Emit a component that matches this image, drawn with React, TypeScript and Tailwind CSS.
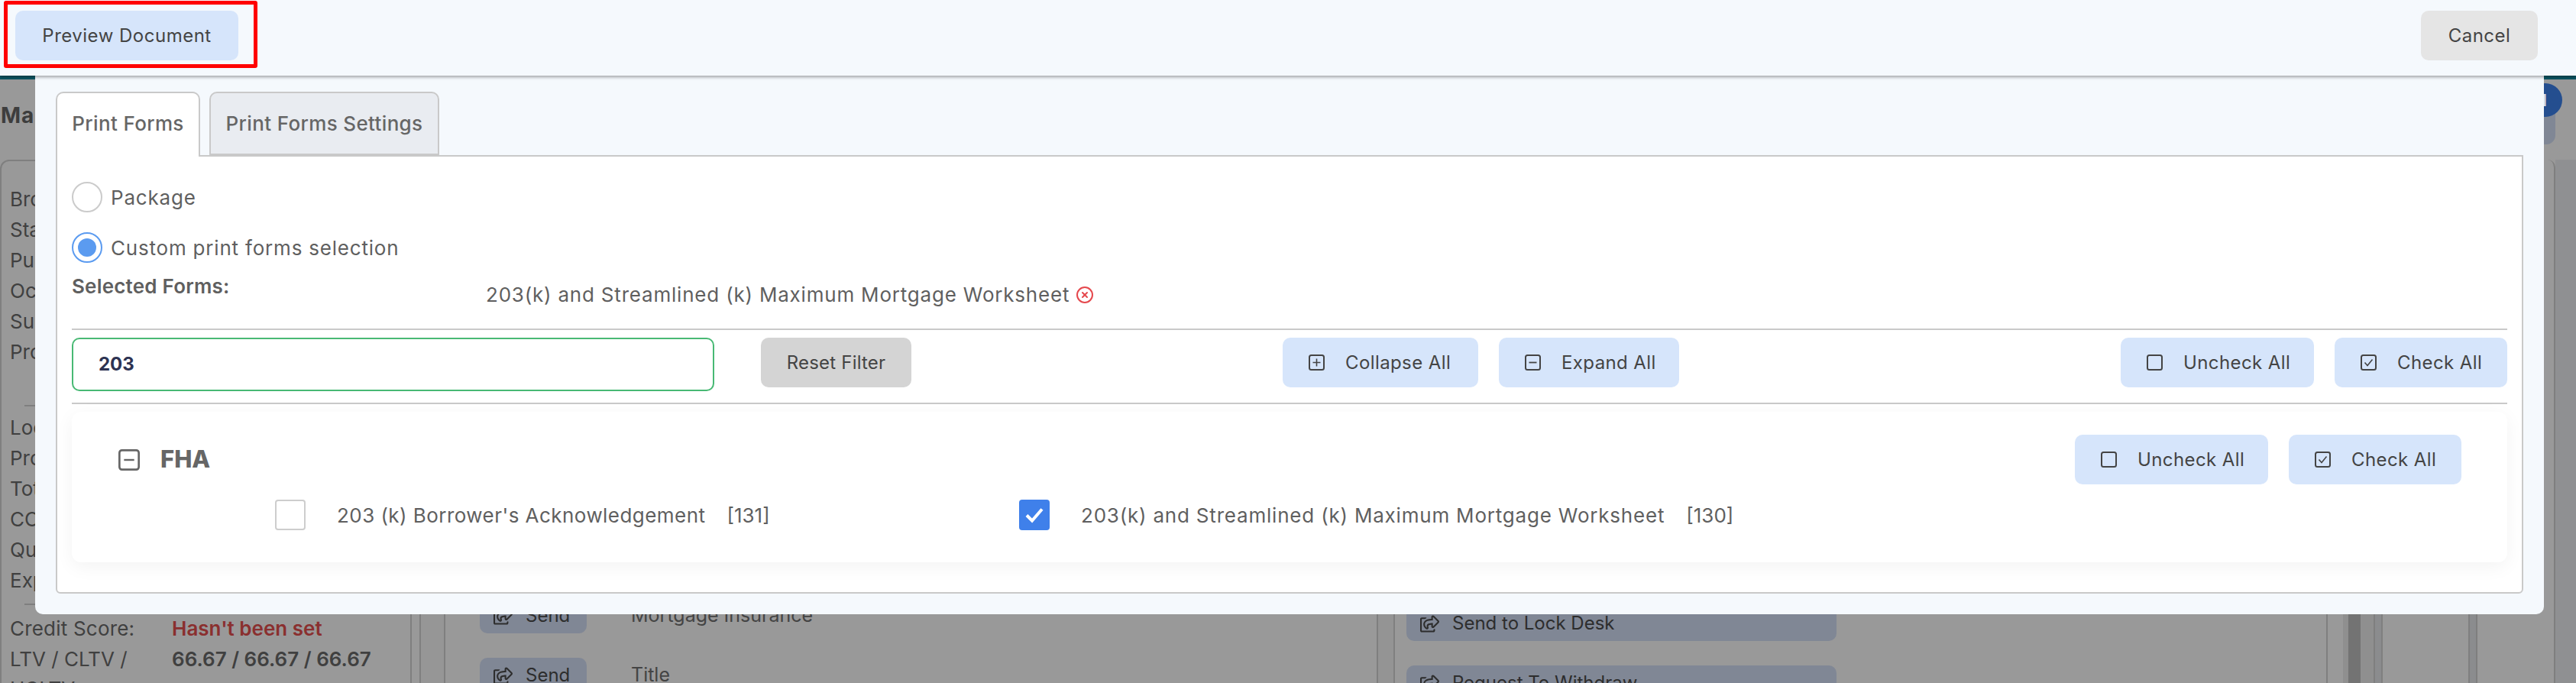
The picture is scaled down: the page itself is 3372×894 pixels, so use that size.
import React from "react";
import { CircleX } from "lucide-react";
import { FaRegShareSquare } from "react-icons/fa";

function BoxIcon({ kind, size = 21 }: { kind: "plus" | "minus" | "check" | "empty"; size?: number }) {
  return (
    <svg width={size} height={size} viewBox="0 0 21 21" fill="none" stroke="currentColor" className="shrink-0">
      <rect x="1" y="1" width="19" height="19" rx="2.5" strokeWidth="2" />
      {kind === "plus" && <path d="M10.5 5.5v10M5.5 10.5h10" strokeWidth="1.6" />}
      {kind === "minus" && <path d="M5.5 10.5h10" strokeWidth="1.8" />}
      {kind === "check" && <path d="M5.5 10.5l3.5 4 6.5-8" strokeWidth="1.6" />}
    </svg>
  );
}

function IconButton({ kind, label, width }: { kind: "plus" | "minus" | "check" | "empty"; label: string; width: string }) {
  return (
    <button className={`flex h-[65px] items-center gap-[27px] rounded-[10px] bg-[#d6e5fb] pl-[34px] text-[24px] tracking-[0.4px] text-[#444] ${width}`}>
      <BoxIcon kind={kind} />
      <span className="whitespace-nowrap">{label}</span>
    </button>
  );
}

function Radio({ checked, label }: { checked?: boolean; label: string }) {
  return (
    <label className="flex items-center gap-[11px] text-[26px] tracking-[0.8px] text-[#5f5f5f]">
      <span
        className={`flex size-[40px] items-center justify-center rounded-full border-2 bg-white ${
          checked ? "border-[#5b9bf0]" : "border-[#cbcbcb]"
        }`}
      >
        {checked && <span className="size-[24px] rounded-full bg-[#5b9bf0]" />}
      </span>
      {label}
    </label>
  );
}

function SendRow({ label }: { label: string }) {
  return (
    <div className="mb-[32px] flex items-center">
      <div className="flex h-[46px] w-[140px] items-center gap-[17px] rounded-[10px] bg-[#808795] pl-[18px] text-[24px] text-[#2d2d2d]">
        <FaRegShareSquare className="text-[25px]" />
        Send
      </div>
      <span className="ml-[58px] text-[25px] text-[#444]">{label}</span>
    </div>
  );
}

function WideSend({ label }: { label: string }) {
  return (
    <div className="mb-[32px] flex h-[46px] w-[563px] items-center gap-[17px] rounded-[10px] bg-[#808795] pl-[18px] text-[24px] text-[#2d2d2d]">
      <FaRegShareSquare className="text-[25px]" />
      {label}
    </div>
  );
}

const sideRows = ["Broker", "Status", "Purpose", "Occupancy", "Subject", "Program"];
const sideRows2 = ["Lock", "Product", "Total", "COE", "Quote", "Expiration"];

function Backdrop() {
  return (
    <div className="flex h-[894px] flex-col bg-[#999] text-[#404040]">
      <div className="h-[104px] bg-[#0b5563]" />
      <div className="relative flex h-[105px] justify-between">
        <h1 className="pl-px pt-[26px] text-[28px] font-bold tracking-[1px] text-[#3d3d3d]">Manage Loan</h1>
        <div className="mr-[27px] mt-[16px] h-[69px] w-[200px] rounded-[12px] bg-[#808795]" />
        <span className="absolute right-[18px] top-[5px] flex h-[44px] w-[80px] items-center justify-end rounded-full bg-[#244e8f] pr-[20px] text-[22px] font-semibold text-[#d5dbe5]">
          1
        </span>
      </div>
      <div className="flex flex-1 overflow-hidden">
        {/* sidebar */}
        <aside className="w-[539px] shrink-0 rounded-tl-[12px] border-x-2 border-t-2 border-[#7f7f7f] pl-[11px] pt-[30px] text-[26px]">
          {sideRows.map((row) => (
            <div key={row} className="h-[40px] leading-[40px]">{row}</div>
          ))}
          <div className="mb-[8px] ml-[19px] mt-[49px] h-[2px] w-[200px] bg-[#7f7f7f]" />
          {sideRows2.map((row) => (
            <div key={row} className="h-[40px] leading-[40px]">{row}</div>
          ))}
          <div className="my-[10px] ml-[19px] h-[2px] w-[200px] bg-[#7f7f7f]" />
          <div className="flex h-[40px] items-center">
            <span className="w-[212px] tracking-[0.2px]">Credit Score:</span>
            <span className="font-semibold text-[#8a2f2f]">Hasn't been set</span>
          </div>
          <div className="flex h-[40px] items-center">
            <span className="w-[212px]">LTV / CLTV /</span>
            <span className="font-semibold">66.67 / 66.67 / 66.67</span>
          </div>
          <div className="h-[40px] leading-[40px]">HCLTV</div>
        </aside>
        <div className="w-[10px] shrink-0" />
        <div className="w-[32px] shrink-0 border-l-2 border-[#7f7f7f] bg-[#969696]" />
        {/* send list */}
        <main className="w-[1223px] shrink-0 border-x-2 border-[#7f7f7f] pl-[45px] pt-[574px]">
          <SendRow label="Mortgage Insurance" />
          <SendRow label="Title" />
        </main>
        <div className="w-[20px] shrink-0 bg-[#949494]" />
        <section className="w-[1221px] shrink-0 border-l-2 border-[#7f7f7f] pl-[15px] pt-[584px]">
          <WideSend label="Send to Lock Desk" />
          <WideSend label="Request To Withdraw" />
        </section>
        {/* right side rails */}
        <div className="w-[22px] shrink-0 border-l-2 border-[#7f7f7f]" />
        <div className="w-[7px] shrink-0 bg-[#8f8f8f]" />
        <div className="w-[16px] shrink-0 bg-[#737373]" />
        <div className="w-[17px] shrink-0 bg-[#8f8f8f]" />
        <div className="w-[12px] shrink-0 border-x-2 border-[#7f7f7f] bg-[#8b8c8e]" />
        <div className="w-[112px] shrink-0" />
        <div className="w-[12px] shrink-0 border-x-2 border-[#7f7f7f] bg-[#8b8c8e]" />
        <div className="w-[102px] shrink-0 rounded-tr-[10px] border-r-2 border-[#7f7f7f]" />
        <div className="flex-1 bg-[#8f9092]" />
      </div>
    </div>
  );
}

function FormsModal() {
  return (
    <div className="absolute left-[46px] top-[99px] h-[705px] w-[3284px] rounded-b-[10px] bg-[#f5f9fd] px-[27px] pt-[21px] text-[#5f5f5f]">
      {/* tabs */}
      <div className="relative z-10 -mb-[2px] flex gap-[12px] text-[26px] font-medium tracking-[0.35px]">
        <div className="flex h-[85px] w-[189px] items-start justify-center rounded-t-[10px] border-2 border-b-0 border-[#c9c9c9] bg-white pt-[20px] text-[#666]">
          Print Forms
        </div>
        <div className="flex h-[83px] w-[301px] items-start justify-center rounded-t-[10px] border-2 border-[#c9c9c9] bg-[#e9ecf1] pt-[20px] text-[#666]">
          Print Forms Settings
        </div>
      </div>
      <div className="h-[574px] rounded-b-[6px] border-2 border-[#c9c9c9] bg-white px-[19px] pt-[33px]">
        <Radio label="Package" />
        <div className="mt-[26px]">
          <Radio checked label="Custom print forms selection" />
        </div>
        <div className="flex h-[86px] items-start">
          <span className="mt-[11px] w-[542px] text-[26px] font-semibold tracking-[0.2px] text-[#5f5f5f]">Selected Forms:</span>
          <span className="mt-[22px] flex items-center gap-[8px] text-[26px] tracking-[0.8px]">
            203(k) and Streamlined (k) Maximum Mortgage Worksheet
            <CircleX size={24} color="#e5484d" strokeWidth={2} />
          </span>
        </div>
        <hr className="border-t-2 border-[#c9c9c9]" />
        <div className="flex h-[95px] items-start pt-[10px]">
          <div className="flex h-[70px] w-[841px] items-center rounded-[10px] border-2 border-[#48b974] pl-[33px] text-[24px] font-bold text-[#2d3352]">
            203
          </div>
          <button className="ml-[61px] h-[65px] w-[197px] rounded-[10px] bg-[#d4d4d4] text-[24px] tracking-[0.2px] text-[#444]">
            Reset Filter
          </button>
          <div className="ml-[486px] flex gap-[27px]">
            <IconButton kind="plus" label="Collapse All" width="w-[256px]" />
            <IconButton kind="minus" label="Expand All" width="w-[236px]" />
          </div>
          <div className="ml-[578px] flex gap-[27px]">
            <IconButton kind="empty" label="Uncheck All" width="w-[253px]" />
            <IconButton kind="check" label="Check All" width="w-[226px]" />
          </div>
        </div>
        <hr className="border-t-2 border-[#c9c9c9]" />
        {/* FHA group */}
        <div className="mt-[10px] h-[197px] rounded-[12px] bg-white pl-[61px] pr-[60px] pt-[30px] shadow-[0_6px_24px_rgba(0,0,0,0.05)]">
          <div className="flex h-[65px] items-center justify-between">
            <div className="flex items-center gap-[27px] text-[#666]">
              <BoxIcon kind="minus" size={28} />
              <span className="text-[31px] font-extrabold">FHA</span>
            </div>
            <div className="flex gap-[27px]">
              <IconButton kind="empty" label="Uncheck All" width="w-[253px]" />
              <IconButton kind="check" label="Check All" width="w-[226px]" />
            </div>
          </div>
          <div className="ml-[205px] mt-[20px] flex text-[26px]">
            <div className="flex w-[974px] items-center">
              <span className="size-[40px] rounded-[4px] border-2 border-[#cdcdcd] bg-white" />
              <span className="ml-[41px] tracking-[0.45px]">203 (k) Borrower's Acknowledgement</span>
              <span className="ml-[28px]">[131]</span>
            </div>
            <div className="flex items-center">
              <span className="flex size-[40px] items-center justify-center rounded-[4px] bg-[#3f80ea]">
                <svg width="26" height="22" viewBox="0 0 26 22" fill="none" stroke="white" strokeWidth="4">
                  <path d="M3 11.5l7 7L23 3.5" />
                </svg>
              </span>
              <span className="ml-[41px] tracking-[0.8px]">203(k) and Streamlined (k) Maximum Mortgage Worksheet</span>
              <span className="ml-[28px]">[130]</span>
            </div>
          </div>
        </div>
      </div>
    </div>
  );
}

export default function App() {
  return (
    <div className="relative h-[894px] w-[3372px] overflow-hidden [font-family:Inter,sans-serif]">
      <Backdrop />
      <div className="absolute inset-x-0 top-0 z-20 flex h-[99px] items-start justify-between bg-[#f5f9fd] px-[20px] pr-[50px] pt-[14px] shadow-[0_2px_4px_rgba(0,0,0,0.35)]">
        <button className="h-[65px] w-[292px] rounded-[10px] bg-[#d6e5fb] text-[24px] tracking-[0.5px] text-[#444]">Preview Document</button>
        <button className="h-[65px] w-[153px] rounded-[10px] bg-[#e5e5e5] text-[24px] tracking-[0.5px] text-[#444]">Cancel</button>
        <div className="absolute left-[5px] top-px h-[88px] w-[332px] rounded-[3px] border-[5px] border-[#ff0000]" />
      </div>
      <FormsModal />
    </div>
  );
}
